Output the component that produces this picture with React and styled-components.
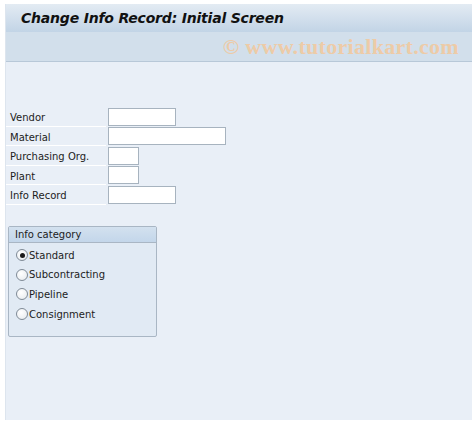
import React from "react";
import styled, { createGlobalStyle } from "styled-components";

const GlobalStyle = createGlobalStyle`
  html, body {
    margin: 0;
    padding: 0;
    background: #ffffff;
  }
  body {
    font-family: Tahoma, "DejaVu Sans", sans-serif;
  }
`;

const Page = styled.div`
  width: 474px;
  height: 424px;
  padding: 4px 2px 4px 5px;
  box-sizing: border-box;
  display: flex;
`;

const Screen = styled.div`
  flex: 1;
  display: flex;
  flex-direction: column;
  background: #e9eff7;
  border-left: 1px solid #dde5ee;
`;

const TitleBar = styled.div`
  height: 28px;
  display: flex;
  align-items: center;
  padding-left: 15px;
  background: linear-gradient(#e3ebf3, #c2d4e6);
  font-family: "DejaVu Sans", sans-serif;
  font-weight: bold;
  font-style: italic;
  font-size: 14px;
  color: #111;
  letter-spacing: -0.2px;
`;

const Toolbar = styled.div`
  height: 29px;
  display: flex;
  align-items: center;
  justify-content: flex-end;
  padding-right: 13px;
  background: #d2dfeb;
  border-bottom: 1px solid #b8c8d8;
`;

const Watermark = styled.span`
  font-family: "Liberation Serif", serif;
  font-size: 22px;
  font-weight: bold;
  color: #f2c89c;
  opacity: 0.85;
  letter-spacing: 0.3px;
`;

const Content = styled.div`
  flex: 1;
  padding: 45px 0 0 0;
  display: flex;
  flex-direction: column;
`;

const Fields = styled.div`
  display: flex;
  flex-direction: column;
`;

const Row = styled.div`
  height: 19.5px;
  display: flex;
  align-items: center;
`;

const Label = styled.div`
  width: 100px;
  height: 100%;
  box-sizing: border-box;
  padding: 3px 0 0 4px;
  display: flex;
  align-items: center;
  border-bottom: 1px solid #ffffff;
  font-family: "DejaVu Sans", sans-serif;
  font-size: 10px;
  color: #1c1c1c;
`;

const Input = styled.div`
  margin-left: 2px;
  width: ${p => p.$w}px;
  height: 18px;
  box-sizing: border-box;
  background: #ffffff;
  border: 1px solid #a7b3bf;
`;

const GroupBox = styled.div`
  margin: 21px 0 0 2px;
  width: 149px;
  height: 111px;
  box-sizing: border-box;
  border: 1px solid #a9b6c4;
  border-radius: 2px;
  background: #e1eaf4;
  display: flex;
  flex-direction: column;
`;

const GroupHeader = styled.div`
  height: 15px;
  display: flex;
  align-items: center;
  padding-left: 6px;
  background: linear-gradient(#d3e1ef, #c3d6ea);
  border-bottom: 1px solid #a9b6c4;
  font-family: "DejaVu Sans", sans-serif;
  font-size: 10px;
  color: #1c1c1c;
`;

const RadioList = styled.div`
  display: flex;
  flex-direction: column;
  padding: 3px 0 0 7px;
`;

const RadioRow = styled.label`
  height: 19.6px;
  display: flex;
  align-items: center;
  gap: 1px;
  font-family: "DejaVu Sans", sans-serif;
  font-size: 10px;
  color: #1c1c1c;
`;

const RadioCircle = styled.span`
  width: 12px;
  height: 12px;
  box-sizing: border-box;
  border-radius: 50%;
  border: 1px solid #7f8a96;
  background: radial-gradient(circle at 40% 35%, #ffffff, #e4e8ec);
  display: flex;
  align-items: center;
  justify-content: center;

  &::after {
    content: "";
    width: 5px;
    height: 5px;
    border-radius: 50%;
    background: ${p => (p.$checked ? "#1a1a1a" : "transparent")};
  }
`;

const fields = [
  { label: "Vendor", width: 68 },
  { label: "Material", width: 118 },
  { label: "Purchasing Org.", width: 31 },
  { label: "Plant", width: 31 },
  { label: "Info Record", width: 68 }
];

const categories = ["Standard", "Subcontracting", "Pipeline", "Consignment"];

export default function App() {
  return (
    <>
      <GlobalStyle />
      <Page>
        <Screen>
          <TitleBar>Change Info Record: Initial Screen</TitleBar>
          <Toolbar>
            <Watermark>© www.tutorialkart.com</Watermark>
          </Toolbar>
          <Content>
            <Fields>
              {fields.map(f => (
                <Row key={f.label}>
                  <Label>{f.label}</Label>
                  <Input $w={f.width} />
                </Row>
              ))}
            </Fields>
            <GroupBox>
              <GroupHeader>Info category</GroupHeader>
              <RadioList>
                {categories.map((c, i) => (
                  <RadioRow key={c}>
                    <RadioCircle $checked={i === 0} />
                    {c}
                  </RadioRow>
                ))}
              </RadioList>
            </GroupBox>
          </Content>
        </Screen>
      </Page>
    </>
  );
}
